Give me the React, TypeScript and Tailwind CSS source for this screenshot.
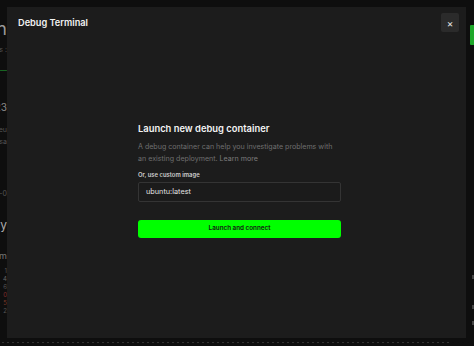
import React from 'react';

const BackdropLeft: React.FC = () => (
  <div className="flex flex-col items-end w-[7px] overflow-hidden pt-[20px] text-right leading-none">
    <span className="text-[18px] text-[#9a9a9a] whitespace-nowrap">Production</span>
    <span className="mt-[8px] text-[7px] text-[#555] whitespace-nowrap">status :</span>
    <span className="mt-[14px] text-[7px] text-[#1f9a2f] whitespace-nowrap">Running ——</span>
    <span className="mt-[28px] text-[10px] text-[#8a8a8a] whitespace-nowrap">v1.23</span>
    <span className="mt-[14px] text-[7px] text-[#555] whitespace-nowrap">region eu</span>
    <span className="mt-[5px] text-[7px] text-[#555] whitespace-nowrap">instance sa</span>
    <span className="mt-[45px] text-[7px] text-[#555] whitespace-nowrap">2024-0</span>
    <span className="mt-[22px] text-[12px] text-[#aaa] whitespace-nowrap">History</span>
    <span className="mt-[20px] text-[9px] text-[#777] whitespace-nowrap">Term</span>
    <div className="mt-[8px] flex flex-col items-end gap-[2px] text-[6px] whitespace-nowrap">
      <span className="text-[#555]">1</span>
      <span className="text-[#666]">4</span>
      <span className="text-[#555]">6</span>
      <span className="text-[#8a2e2e]">0</span>
      <span className="text-[#7a3a2a]">5</span>
      <span className="text-[#555]">2</span>
    </div>
  </div>
);

const BackdropRight: React.FC = () => (
  <div className="flex flex-col items-end w-[8px] pt-[25px]">
    <div className="w-[4px] h-[20px] bg-[#1ea82a] rounded-l-[1px]" />
    <div className="mt-[230px] w-[2px] h-[4px] bg-[#444]" />
    <div className="mt-[26px] w-[2px] h-[4px] bg-[#444]" />
    <div className="mt-[12px] w-[2px] h-[4px] bg-[#444]" />
  </div>
);

export default function App() {
  return (
    <div
      className="relative w-[474px] h-[346px] overflow-hidden bg-[#0e0e0e] flex justify-between"
      style={{ fontFamily: 'Inter, "Liberation Sans", sans-serif' }}
    >
      <BackdropLeft />
      <BackdropRight />

      <div className="absolute left-0 right-0 bottom-0 h-[8px] flex items-center gap-[3px] px-[2px] overflow-hidden">
        {Array.from({ length: 90 }).map((_, i) => (
          <span key={i} className="w-[2px] h-[1px] bg-[#333] shrink-0" />
        ))}
      </div>

      {/* Modal */}
      <div className="absolute left-[7px] top-[7px] w-[459px] h-[331px] bg-[#1c1c1c] flex flex-col">
        <div className="flex items-start justify-between pl-[11px] pr-[7px] pt-[6px]">
          <h1 className="mt-[5px] text-[9.2px] font-semibold text-[#f2f2f2] leading-none">Debug Terminal</h1>
          <button className="w-[18px] h-[19px] rounded-[2px] bg-[#2b2b2b] flex items-center justify-center text-[10px] leading-none text-[#e6e6e6]">
            ×
          </button>
        </div>

        <div className="flex flex-1 flex-col pl-[131px] pt-[91px]">
          <div className="w-[203px] flex flex-col">
            <h2 className="text-[9.4px] font-semibold text-[#f4f4f4] leading-[12px]">
              Launch new debug container
            </h2>
            <p className="mt-[6px] text-[7.1px] leading-[12px] text-[#6f6f6f]">
              A debug container can help you investigate problems with an existing deployment.{' '}
              <span className="text-[#7d7d7d]">Learn more</span>
            </p>
            <label className="mt-[6px] text-[5.9px] font-semibold text-[#cfcfcf] leading-[8px]">
              Or, use custom image
            </label>
            <div className="mt-[3px] h-[20px] border border-[#343434] rounded-[2px] bg-[#1b1b1b] flex items-center pl-[7px]">
              <span className="text-[7.3px] text-[#e2e2e2]">ubuntu:latest</span>
            </div>
            <button className="mt-[18px] h-[18px] rounded-[3px] bg-[#00ff00] flex items-center justify-center">
              <span className="text-[6.3px] font-semibold text-[#151515]">Launch and connect</span>
            </button>
          </div>
        </div>
      </div>
    </div>
  );
}
